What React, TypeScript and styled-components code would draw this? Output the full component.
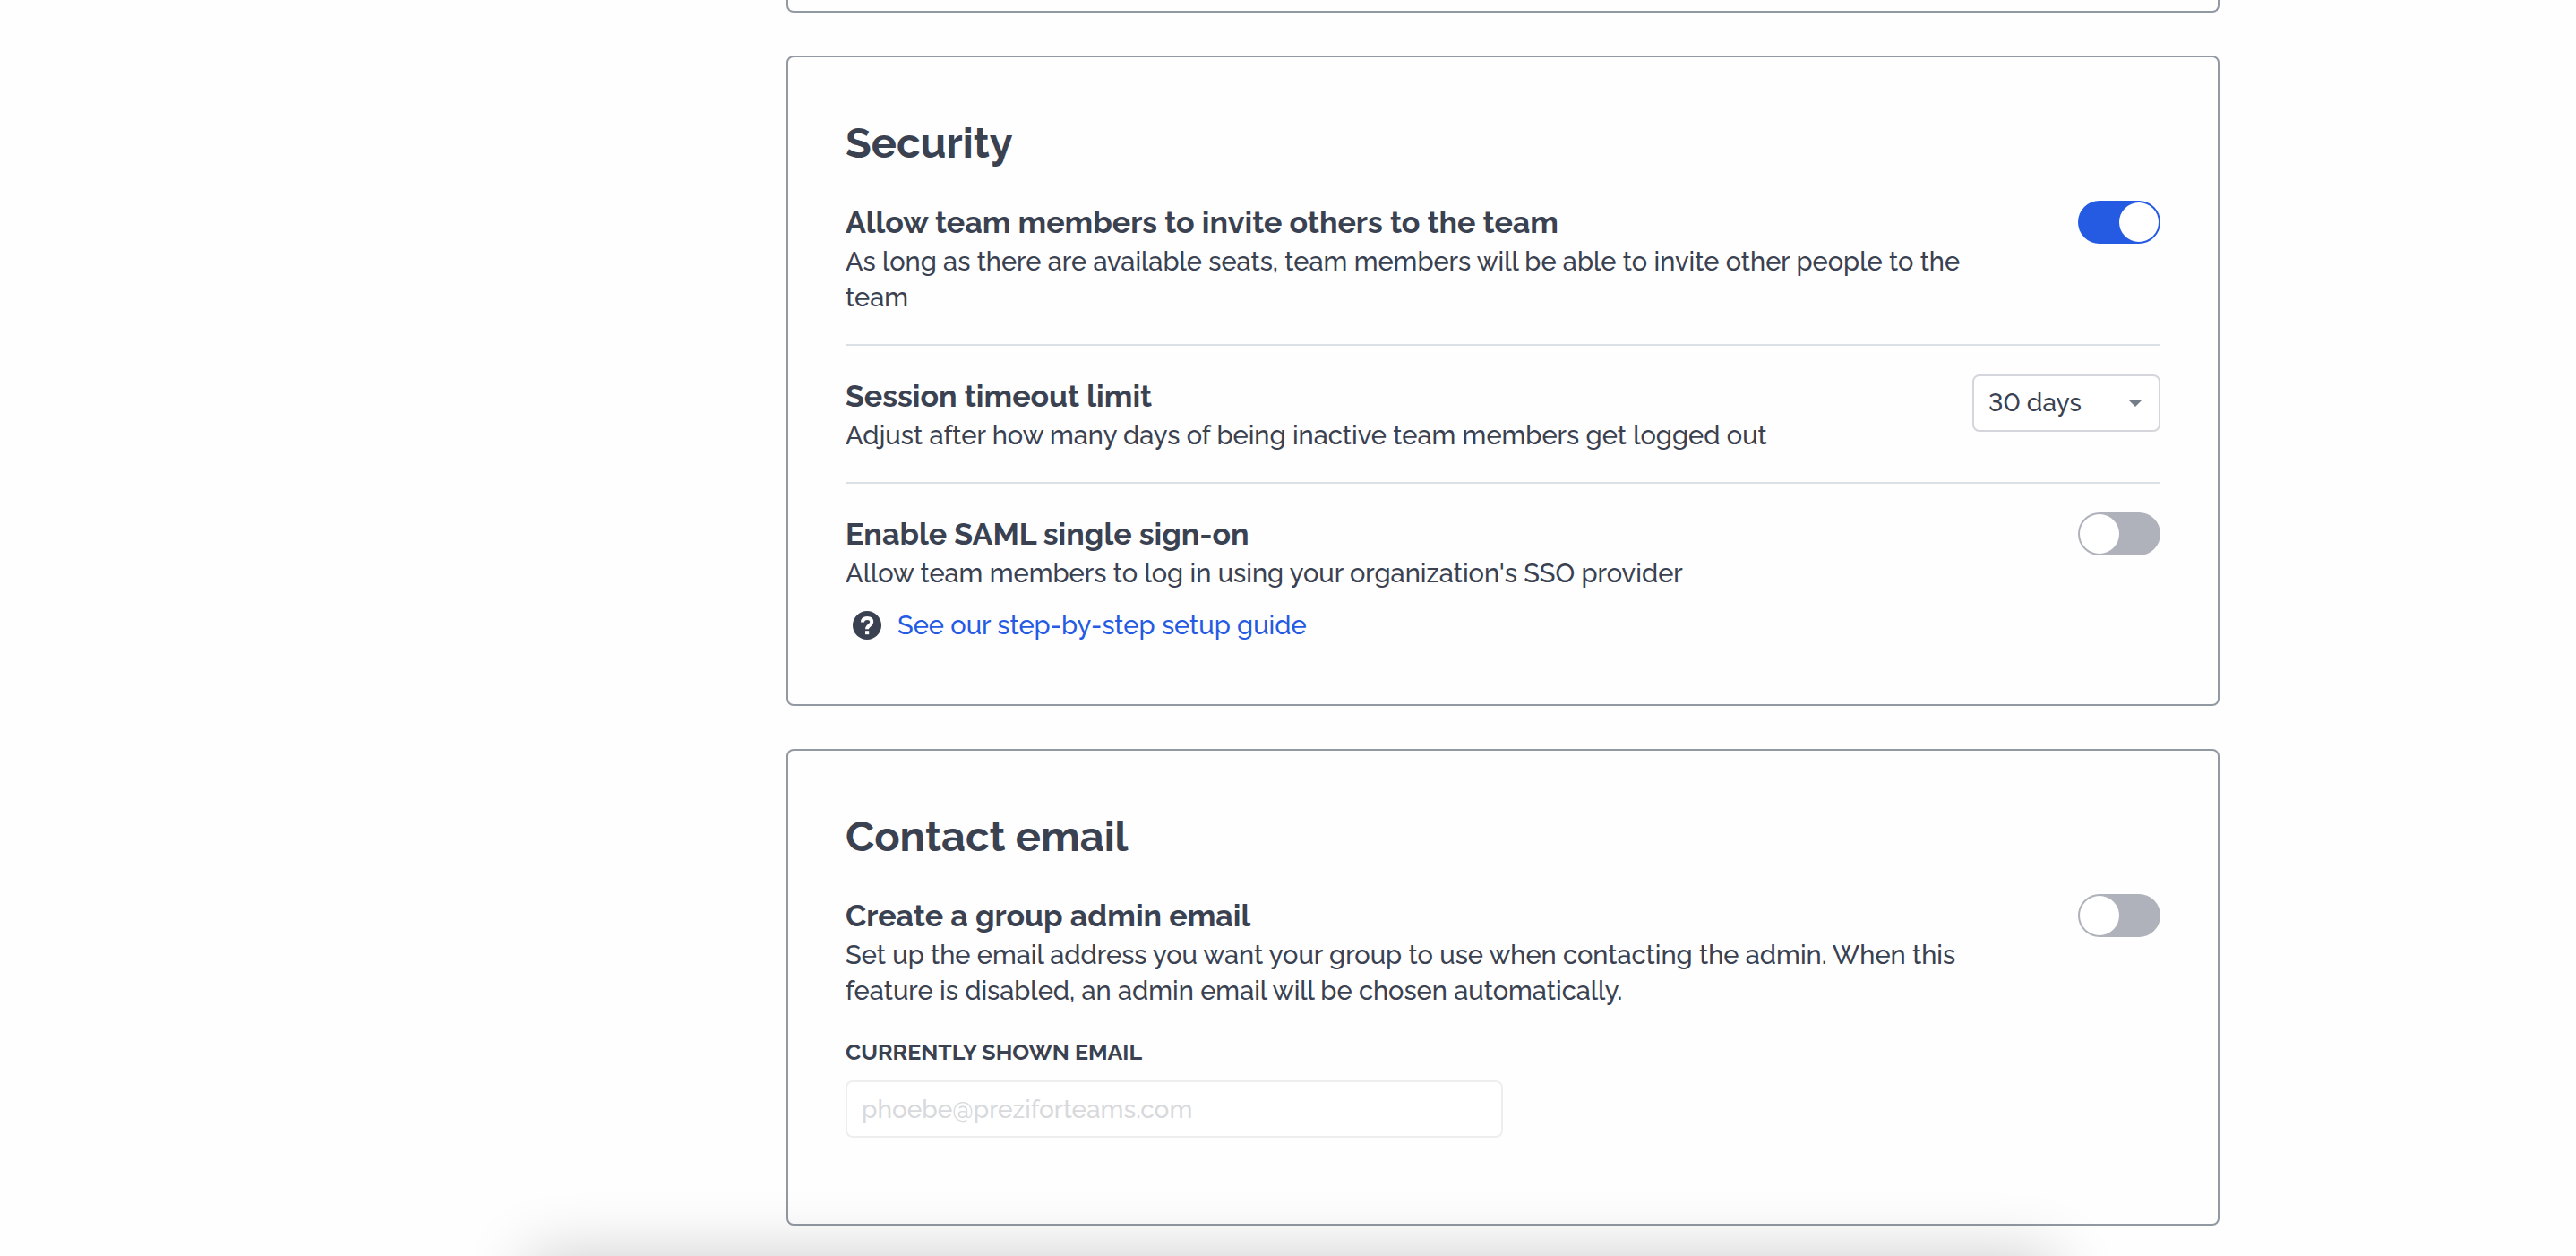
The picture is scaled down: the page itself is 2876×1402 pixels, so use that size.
import React, { ReactNode, useId, useState } from "react";
import styled, { createGlobalStyle } from "styled-components";

const ink = "#3a4150";
const outline = "#9299a3";
const family = `Raleway, Montserrat, "Open Sans", sans-serif`;

const GlobalStyle = createGlobalStyle`
  *, *::before, *::after {
    box-sizing: border-box;
  }

  body {
    margin: 0;
    background: #fefefe;
    color: ${ink};
    font: 500 29px/40px ${family};
    font-variant-numeric: lining-nums;
  }
`;

const Page = styled.main`
  display: flex;
  justify-content: flex-end;
  height: 100vh;
  padding-right: 398px;
  overflow: hidden;
`;

const Column = styled.div`
  display: flex;
  flex: 0 1 1600px;
  flex-direction: column;
  gap: 48px;
`;

const Card = styled.section`
  border: 2px solid ${outline};
  border-radius: 8px;
  padding: 64px 64px 32px;
`;

/* Tail of the card scrolled out above the viewport. */
const CardEnd = styled.div`
  height: 14px;
  border: 2px solid ${outline};
  border-top: 0;
  border-radius: 0 0 8px 8px;
`;

const Heading = styled.h2`
  margin: 0;
  font-size: 47px;
  font-weight: 700;
  line-height: 64px;
`;

const Row = styled.div<{ $divided?: boolean }>`
  display: flex;
  justify-content: space-between;
  align-items: flex-start;
  padding: 32px 0;
  border-bottom: ${(p) => (p.$divided ? "2px solid #dbe0e4" : "0")};
`;

const Copy = styled.div`
  width: 1250px;
`;

const Title = styled.label`
  display: block;
  font-size: 34px;
  font-weight: 700;
  line-height: 48px;
`;

const Description = styled.p`
  margin: 0;
`;

const Switch = styled.input`
  appearance: none;
  display: flex;
  flex: none;
  width: 92px;
  height: 48px;
  margin: 0;
  padding: 2px;
  border-radius: 24px;
  background: #afb2ba;
  cursor: pointer;

  &::before {
    content: "";
    width: 44px;
    height: 44px;
    border-radius: 50%;
    background: #fff;
  }

  &:checked {
    justify-content: flex-end;
    background: #255ae3;
  }
`;

const SelectBox = styled.div`
  display: grid;
  flex: none;
  align-items: center;
  width: 210px;

  > * {
    grid-area: 1 / 1;
  }
`;

const Select = styled.select`
  appearance: none;
  width: 100%;
  height: 64px;
  padding: 0 16px;
  border: 2px solid #d5d6db;
  border-radius: 8px;
  background: #fff;
  color: ${ink};
  font: 500 28px/40px ${family};
  font-variant-numeric: lining-nums;
`;

const Caret = styled.svg`
  justify-self: end;
  width: 16px;
  height: 8px;
  margin-right: 20px;
  fill: #747d87;
  pointer-events: none;
`;

const Guide = styled.div`
  display: flex;
  align-items: center;
  gap: 18px;
  height: 48px;
  margin-top: 14px;
  padding-left: 8px;
`;

const HelpIcon = styled.svg`
  width: 32px;
  height: 32px;
`;

const GuideLink = styled.a`
  color: #255ae3;
  text-decoration: none;
`;

const Field = styled.div`
  width: 50%;
  padding-bottom: 64px;
`;

const FieldLabel = styled.label`
  display: block;
  margin-bottom: 16px;
  font-size: 25px;
  font-weight: 700;
  line-height: 32px;
  text-transform: uppercase;
`;

const EmailInput = styled.input`
  display: block;
  width: 100%;
  height: 64px;
  padding: 0 16px;
  border: 2px solid #eeeeef;
  border-radius: 8px;
  background: #fff;
  font: 500 28px/40px ${family};

  &::placeholder {
    color: #d8d9dc;
    opacity: 1;
  }
`;

/* Panel resting just under the fold; only its shadow shows. */
const BottomPanel = styled.div`
  position: fixed;
  top: 100%;
  left: 50%;
  width: 1704px;
  height: 200px;
  margin-left: -848px;
  box-shadow: 0 0 72px rgba(0, 0, 0, 0.2);
  pointer-events: none;
`;

function Setting({
  title,
  description,
  divided,
  control,
  children,
}: {
  title: string;
  description: string;
  divided?: boolean;
  control: (id: string) => ReactNode;
  children?: ReactNode;
}) {
  const id = useId();
  return (
    <Row $divided={divided}>
      <Copy>
        <Title htmlFor={id}>{title}</Title>
        <Description>{description}</Description>
        {children}
      </Copy>
      {control(id)}
    </Row>
  );
}

function Toggle({ id, initial = false }: { id: string; initial?: boolean }) {
  const [on, setOn] = useState(initial);
  return <Switch id={id} type="checkbox" role="switch" checked={on} onChange={(e) => setOn(e.target.checked)} />;
}

export default function App() {
  return (
    <>
      <GlobalStyle />
      <Page>
        <Column>
          <CardEnd />
          <Card>
            <Heading>Security</Heading>
            <Setting
              divided
              title="Allow team members to invite others to the team"
              description="As long as there are available seats, team members will be able to invite other people to the team"
              control={(id) => <Toggle id={id} initial />}
            />
            <Setting
              divided
              title="Session timeout limit"
              description="Adjust after how many days of being inactive team members get logged out"
              control={(id) => (
                <SelectBox>
                  <Select id={id} defaultValue="30">
                    <option value="30">30 days</option>
                  </Select>
                  <Caret viewBox="0 0 16 8" aria-hidden="true">
                    <path d="M0 0h16L8 8z" />
                  </Caret>
                </SelectBox>
              )}
            />
            <Setting
              title="Enable SAML single sign-on"
              description="Allow team members to log in using your organization's SSO provider"
              control={(id) => <Toggle id={id} />}
            >
              <Guide>
                <HelpIcon viewBox="0 0 32 32" aria-hidden="true">
                  <circle cx="16" cy="16" r="16" fill={ink} />
                  <path
                    d="M11 12.6C11 9.6 13 8 16.2 8s5 1.6 5 4.2c0 4.2-5.2 3.6-5.2 8"
                    fill="none"
                    stroke="#fff"
                    strokeWidth="4"
                  />
                  <path d="M14 22.2h4.2v4H14z" fill="#fff" />
                </HelpIcon>
                <GuideLink href="#setup-guide">See our step-by-step setup guide</GuideLink>
              </Guide>
            </Setting>
          </Card>
          <Card>
            <Heading>Contact email</Heading>
            <Setting
              title="Create a group admin email"
              description="Set up the email address you want your group to use when contacting the admin. When this feature is disabled, an admin email will be chosen automatically."
              control={(id) => <Toggle id={id} />}
            />
            <Field>
              <FieldLabel htmlFor="shown-email">Currently shown email</FieldLabel>
              <EmailInput id="shown-email" type="email" placeholder="phoebe@preziforteams.com" disabled />
            </Field>
          </Card>
        </Column>
      </Page>
      <BottomPanel />
    </>
  );
}
